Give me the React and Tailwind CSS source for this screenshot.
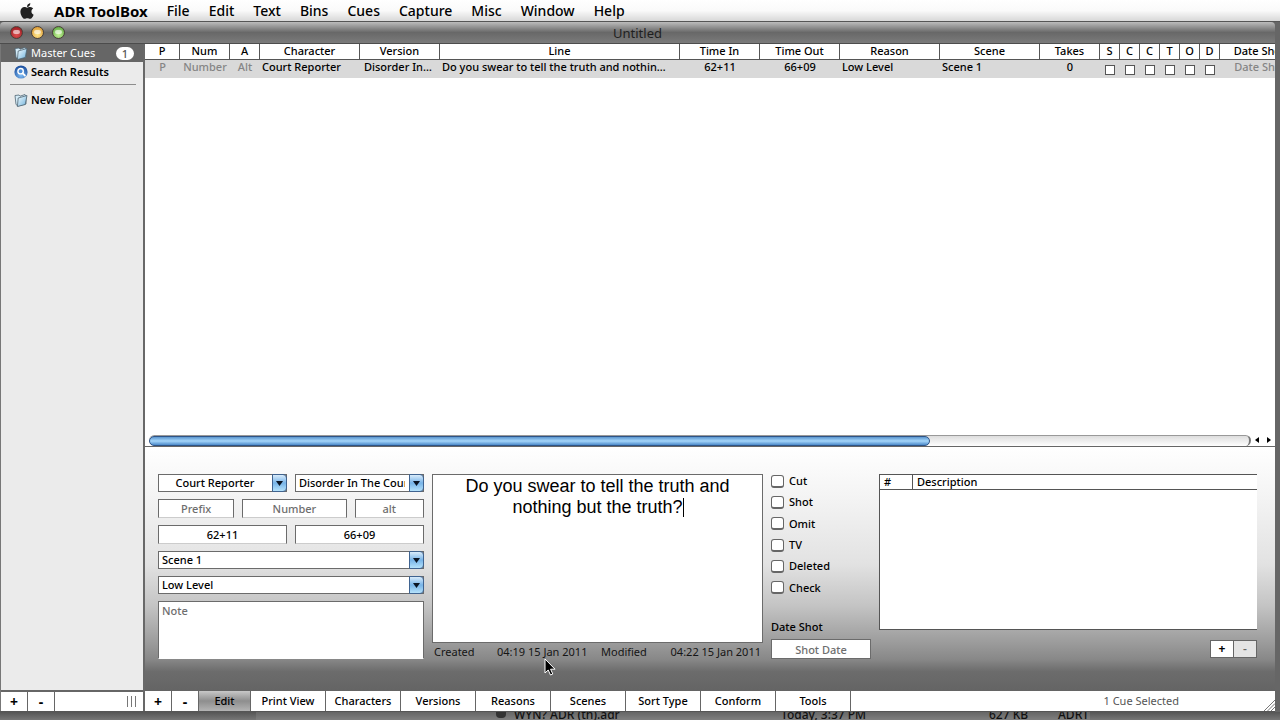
import React, { useState } from 'react';
import { FaApple } from 'react-icons/fa';

const MENUS = ['File', 'Edit', 'Text', 'Bins', 'Cues', 'Capture', 'Misc', 'Window', 'Help'];

const COLUMNS = [
    { label: 'P', width: 35, value: 'P', cell: 'text-center text-[#858585]' },
    { label: 'Num', width: 50, value: 'Number', cell: 'text-center text-[#858585]' },
    { label: 'A', width: 30, value: 'Alt', cell: 'text-center text-[#858585]' },
    { label: 'Character', width: 100, value: 'Court Reporter', cell: 'pl-[2px]' },
    { label: 'Version', width: 80, value: 'Disorder In…', cell: 'pl-1' },
    { label: 'Line', width: 240, value: 'Do you swear to tell the truth and nothin…', cell: 'pl-[2px]' },
    { label: 'Time In', width: 80, value: '62+11', cell: 'text-center' },
    { label: 'Time Out', width: 80, value: '66+09', cell: 'text-center' },
    { label: 'Reason', width: 100, value: 'Low Level', cell: 'pl-[2px]' },
    { label: 'Scene', width: 100, value: 'Scene 1', cell: 'pl-[2px]' },
    { label: 'Takes', width: 60, value: '0', cell: 'text-center' },
    { label: 'S', width: 20, check: 'Shot' },
    { label: 'C', width: 20, check: 'Cut' },
    { label: 'C', width: 20, check: 'Check' },
    { label: 'T', width: 20, check: 'TV' },
    { label: 'O', width: 20, check: 'Omit' },
    { label: 'D', width: 20, check: 'Deleted' },
    { label: 'Date Shot', width: 80, value: 'Date Shot', cell: 'text-center text-[#858585]' },
];

const TABS = ['Print View', 'Characters', 'Versions', 'Reasons', 'Scenes', 'Sort Type', 'Conform', 'Tools'];
const FLAGS = ['Cut', 'Shot', 'Omit', 'TV', 'Deleted', 'Check'];

const FIELD = 'w-full min-w-0 rounded-none border border-[#6b6b6b] bg-white outline-none placeholder:text-[#6e6e6e]';

function FolderIcon() {
    return (
        <svg viewBox="0 0 14 14" className="h-[14px] w-[14px] shrink-0">
            <defs>
                <linearGradient id="folder" x1="0" y1="0" x2="1" y2="1">
                    <stop offset="0" stopColor="#f4fcff" />
                    <stop offset="1" stopColor="#6fb2dc" />
                </linearGradient>
            </defs>
            <path d="M1 2.500 5 2l1 1.200L11 1.500l1 1.500v8l-8 2-2-1.500z" fill="#d4ebf7" stroke="#4f6472" strokeWidth=".8" />
            <path d="M4.200 5 13 2.500l-1.800 9L3.400 13.500z" fill="url(#folder)" stroke="#4f6472" strokeWidth=".8" />
        </svg>
    );
}

function SearchIcon() {
    return (
        <svg viewBox="0 0 14 14" className="h-[14px] w-[14px] shrink-0">
            <defs>
                <radialGradient id="lens" cx=".5" cy=".75" r=".7">
                    <stop offset="0" stopColor="#7ebcf5" />
                    <stop offset="1" stopColor="#1c4f9e" />
                </radialGradient>
            </defs>
            <circle cx="7" cy="7" r="6.6" fill="url(#lens)" />
            <circle cx="6.6" cy="6.2" r="2.7" fill="#4e8fd8" stroke="#fff" strokeWidth="1.4" />
            <path d="m8.700 8.300 2.200 2.200" stroke="#fff" strokeWidth="1.8" strokeLinecap="round" />
        </svg>
    );
}

function TrafficLight({ label, color }) {
    return (
        <button aria-label={label} className={`h-[13px] w-[13px] rounded-full border border-[#4a4038] ${color}`}>
            <span className="mx-auto -mt-px block h-[4px] w-[7px] rounded-full bg-white/60" />
        </button>
    );
}

function Combo({ label, value, className = '' }) {
    return (
        <div className={`relative flex ${className}`}>
            <select aria-label={label} defaultValue={value} className={`${FIELD} h-[18px] appearance-none pr-[18px] pl-[3px]`}>
                <option>{value}</option>
            </select>
            <span className="pointer-events-none absolute inset-y-0 right-0 flex w-[15px] items-center justify-center rounded-r-[4px] border border-[#3f6390] bg-linear-to-b from-[#d9ecfb] via-[#77b4e8] to-[#b5e2fb]">
                <svg viewBox="0 0 7 5" className="h-[5px] w-[7px]">
                    <path d="M0 0h7L3.500 5z" fill="#0b1524" />
                </svg>
            </span>
        </div>
    );
}

function MenuBar() {
    return (
        <nav className="flex h-[22px] shrink-0 items-center border-b border-[#555] bg-linear-to-b from-white via-[#fafafa] to-[#d8d8d8] pl-[18px] text-[14px] leading-[20px] font-medium">
            <FaApple className="mr-[18px] h-[18px] w-[18px] text-[#222]" />
            <button className="mr-[19px] text-[15px] font-bold">ADR ToolBox</button>
            <div className="flex gap-[19px]">
                {MENUS.map((m) => <button key={m}>{m}</button>)}
            </div>
        </nav>
    );
}

function Sidebar() {
    return (
        <aside className="flex w-[145px] shrink-0 flex-col border-r-2 border-l border-r-[#686868] border-l-[#777] bg-[#ebebeb]">
            <a href="#master" className="flex h-[18px] items-center gap-[3px] bg-[#666] pr-[9px] pl-[13px] text-white">
                <FolderIcon />
                <span className="flex-1 font-normal">Master Cues</span>
                <span className="h-[13px] w-[18px] rounded-full bg-white text-center leading-[13px] text-[#555]">1</span>
            </a>
            <a href="#search" className="flex h-[20px] items-center gap-[3px] pl-[13px]">
                <SearchIcon />
                <span className="font-semibold">Search Results</span>
            </a>
            <hr className="mt-[2px] mr-[7px] mb-[5px] ml-[9px] border-[#8d8d8d]" />
            <a href="#folder" className="flex h-[20px] items-center gap-[3px] pl-[13px]">
                <FolderIcon />
                <span className="font-semibold">New Folder</span>
            </a>
            <div className="mt-auto flex h-[21px] border-t-2 border-[#666] bg-white text-[14px] font-bold">
                <button aria-label="Add folder" className="w-[27px] border-r border-[#666] leading-[19px]">+</button>
                <button aria-label="Remove folder" className="w-[27px] border-r border-[#666] leading-[19px]">-</button>
                <span className="mr-[7px] ml-auto flex items-center gap-[3px]">
                    <i className="h-[11px] w-px bg-[#777]" />
                    <i className="h-[11px] w-px bg-[#777]" />
                    <i className="h-[11px] w-px bg-[#777]" />
                </span>
            </div>
        </aside>
    );
}

function CueTable() {
    return (
        <div className="min-h-0 flex-1 overflow-hidden bg-white">
            <table className="w-[1155px] table-fixed border-separate border-spacing-0">
                <colgroup>
                    {COLUMNS.map((c, i) => <col key={i} style={{ width: c.width }} />)}
                </colgroup>
                <thead>
                    <tr className="h-[16px]">
                        {COLUMNS.map((c, i) => (
                            <th key={i} className="border-r border-b border-[#555] p-0 align-top leading-[14px] font-medium whitespace-nowrap">{c.label}</th>
                        ))}
                    </tr>
                </thead>
                <tbody>
                    <tr className="h-[18px] bg-[#d9d9d9]">
                        {COLUMNS.map((c, i) => (
                            <td key={i} className={`overflow-hidden p-0 align-top leading-[14px] whitespace-nowrap ${c.check ? 'text-center' : c.cell}`}>
                                {c.check
                                    ? <input type="checkbox" aria-label={c.check} className="mx-auto mt-[5px] block h-[10px] w-[10px] appearance-none border border-[#555] bg-white" />
                                    : c.value}
                            </td>
                        ))}
                    </tr>
                </tbody>
            </table>
        </div>
    );
}

function ScrollBar() {
    return (
        <div className="flex h-[13px] shrink-0 items-center border-b border-[#666] bg-white pl-[4px]">
            <div className="h-[11px] flex-1 rounded-full border-t border-r-2 border-t-[#999] border-r-[#777] bg-linear-to-b from-[#ddd] to-white">
                <div className="h-[10px] w-[71%] rounded-full border border-[#2f5486] bg-linear-to-b from-[#5b96cf] via-[#a5d6fa] to-[#4b8aca]" />
            </div>
            <button aria-label="Scroll left" className="flex w-[12px] justify-center">
                <svg viewBox="0 0 4 6" className="h-[6px] w-[4px]"><path d="M4 0v6L0 3z" /></svg>
            </button>
            <button aria-label="Scroll right" className="flex w-[12px] justify-center">
                <svg viewBox="0 0 4 6" className="h-[6px] w-[4px]"><path d="M0 0v6l4-3z" /></svg>
            </button>
        </div>
    );
}

function EditPanel() {
    const [line, setLine] = useState('Do you swear to tell the truth and nothing but the truth?');

    return (
        <div className="relative flex h-[244px] shrink-0 gap-2 bg-[linear-gradient(to_bottom,#fff_0%,#f4f4f4_20%,#e2e2e2_48%,#c4c4c4_65%,#9c9c9c_80%,#888_87%,#6c6c6c_92%,#646464_100%)] pt-[27px] pr-[18px] pl-[13px]">
            <div className="flex w-[266px] shrink-0 flex-col gap-[7px]">
                <div className="grid grid-cols-2 gap-2">
                    <Combo label="Character" value="Court Reporter" className="[&>select]:[text-align-last:center]" />
                    <Combo label="Version" value="Disorder In The Court" />
                </div>
                <div className="flex gap-2">
                    <input aria-label="Prefix" placeholder="Prefix" className={`${FIELD} h-[19px] flex-[76] border-b-[#ccc] text-center`} />
                    <input aria-label="Number" placeholder="Number" className={`${FIELD} h-[19px] flex-[105] border-b-[#ccc] text-center`} />
                    <input aria-label="Alt" placeholder="alt" className={`${FIELD} h-[19px] flex-[69] border-b-[#ccc] text-center`} />
                </div>
                <div className="grid grid-cols-2 gap-2">
                    <input aria-label="Time in" defaultValue="62+11" className={`${FIELD} h-[19px] border-b-[#ccc] text-center`} />
                    <input aria-label="Time out" defaultValue="66+09" className={`${FIELD} h-[19px] border-b-[#ccc] text-center`} />
                </div>
                <Combo label="Scene" value="Scene 1" />
                <Combo label="Reason" value="Low Level" />
                <textarea aria-label="Note" placeholder="Note" className={`${FIELD} h-[58px] resize-none border-b-white px-[3px] leading-[18px]`} />
            </div>

            <div className="w-[331px] shrink-0">
                <div className="relative">
                    <textarea
                        aria-label="Line"
                        value={line}
                        onChange={(e) => setLine(e.target.value)}
                        className={`${FIELD} block h-[169px] resize-none px-4 py-px text-center font-['Liberation_Sans',sans-serif] text-[18px] leading-[21px] font-normal`}
                    />
                    <span className="absolute top-[24px] left-[251px] h-[19px] w-px bg-black" />
                </div>
                <div className="flex px-[2px] leading-[18px] font-normal text-[#151515]">
                    <span className="w-[63px]">Created</span>
                    <span className="w-[104px]">04:19 15 Jan 2011</span>
                    <span>Modified</span>
                    <span className="ml-auto">04:22 15 Jan 2011</span>
                </div>
            </div>

            <div className="flex w-[100px] shrink-0 flex-col">
                <div className="flex h-[121px] flex-col justify-between">
                    {FLAGS.map((f) => (
                        <label key={f} className="flex h-[14px] items-center gap-[5px]">
                            <input type="checkbox" className="h-[13px] w-[13px] appearance-none rounded-[3px] border border-b-2 border-[#666] bg-white" />
                            {f}
                        </label>
                    ))}
                </div>
                <label htmlFor="shot-date" className="mt-[23px] leading-[18px]">Date Shot</label>
                <input id="shot-date" placeholder="Shot Date" className={`${FIELD} mt-[3px] h-[20px] text-center`} />
            </div>

            <div className="flex min-w-0 flex-1 flex-col">
                <div className="h-[156px] border-y border-l border-[#555] bg-white">
                    <table className="w-full table-fixed border-separate border-spacing-0">
                        <thead>
                            <tr>
                                <th className="w-[33px] border-r border-b border-[#555] p-0 pl-1 text-left leading-[14px] font-medium">#</th>
                                <th className="border-b border-[#555] p-0 pl-1 text-left leading-[14px] font-medium">Description</th>
                            </tr>
                        </thead>
                    </table>
                </div>
                <div className="mt-[10px] ml-auto flex h-[18px] w-[47px] border border-[#666] bg-white text-[12px]">
                    <button aria-label="Add take" className="flex-1 border-r border-[#666] leading-[16px] font-bold">+</button>
                    <button aria-label="Remove take" className="flex-1 bg-[#e4e4e4] leading-[16px] text-[#666]">-</button>
                </div>
            </div>

            <svg viewBox="0 0 12 18" className="absolute top-[211px] left-[399px] h-[18px] w-[12px]">
                <path d="M1 1v14l3.200-3L6.500 17l2.300-1-2.200-4.800H11z" fill="#000" stroke="#fff" />
            </svg>
        </div>
    );
}

function BottomBar() {
    return (
        <footer className="flex h-[20px] shrink-0 items-stretch bg-white">
            <button aria-label="Add cue" className="w-[27px] border-r border-[#666] text-[14px] font-bold">+</button>
            <button aria-label="Remove cue" className="w-[27px] border-r border-[#666] text-[14px] font-bold">-</button>
            <button className="w-[52px] border-r border-[#666] bg-linear-to-b from-[#c8c8c8] via-[#8e8e8e] to-[#b4b4b4]">Edit</button>
            {TABS.map((t) => (
                <button key={t} className="w-[75px] border-r border-[#666]">{t}</button>
            ))}
            <span className="ml-auto self-center pr-[84px] font-normal text-[#555]">1 Cue Selected</span>
            <svg viewBox="0 0 12 12" className="h-[12px] w-[12px] self-end" stroke="#777">
                <path d="M1 12 12 1M4.500 12 12 4.500M8 12l4-4" />
            </svg>
        </footer>
    );
}

export default function App() {
    return (
        <div className="flex h-screen flex-col overflow-hidden bg-[#666] font-['Noto_Sans',sans-serif] text-[11px] font-medium text-black">
            <MenuBar />
            <main className="mr-[5px] flex min-h-0 flex-1 flex-col border-b border-[#555]">
                <header className="relative flex h-[22px] shrink-0 items-center gap-2 rounded-t-[4px] border-b border-[#4c4c4c] bg-linear-to-b from-[#bcbcbc] via-[#686868] to-[#7b7b7b] pl-[10px]">
                    <TrafficLight label="Close" color="bg-[radial-gradient(circle_at_50%_70%,#e05050,#8c1018)]" />
                    <TrafficLight label="Minimize" color="bg-[radial-gradient(circle_at_50%_70%,#ffe890,#d68a20)]" />
                    <TrafficLight label="Zoom" color="bg-[radial-gradient(circle_at_50%_70%,#c8f59a,#4a9a30)]" />
                    <h1 className="pointer-events-none absolute inset-x-0 text-center text-[13px] leading-[18px] font-normal text-[#1f1f1f]">Untitled</h1>
                </header>
                <div className="flex min-h-0 flex-1">
                    <Sidebar />
                    <section className="flex min-w-0 flex-1 flex-col">
                        <CueTable />
                        <ScrollBar />
                        <EditPanel />
                        <BottomBar />
                    </section>
                </div>
            </main>
            {/* Strip of the Finder list left showing under the window */}
            <div className="flex h-[8px] shrink-0 overflow-hidden bg-linear-to-b from-[#555] to-[#777] text-[12px] text-[#111]">
                <div className="ml-[256px] flex w-[834px] bg-linear-to-b from-[#666] to-[#808080] pl-[240px]">
                    <i className="mr-[8px] h-[6px] w-[10px] rounded-b bg-[#333]" />
                    <span className="-mt-[7px] w-[267px] leading-[20px]">WYN? ADR (th).adr</span>
                    <span className="-mt-[7px] w-[208px] leading-[20px]">Today, 3:37 PM</span>
                    <span className="-mt-[7px] w-[69px] leading-[20px]">627 KB</span>
                    <span className="-mt-[7px] leading-[20px]">ADRT</span>
                </div>
            </div>
        </div>
    );
}
